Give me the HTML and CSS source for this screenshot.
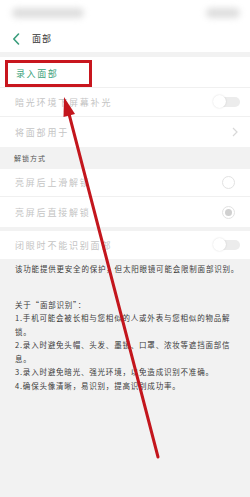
FILE: index.html
```html
<!DOCTYPE html>
<html lang="zh">
<head>
    <meta charset="UTF-8">
    <meta name="viewport" content="width=device-width, initial-scale=1.0">
    <title>面部</title>
    <link rel="stylesheet" href="styles.css">
</head>
<body>
    <div class="page">
        <div class="status">
            <span class="blob blob-left"></span>
            <span class="blob blob-right"></span>
        </div>

        <div class="nav">
            <svg class="back" width="8" height="12" viewBox="0 0 8 12">
                <path d="M6.5 1 L1.8 6 L6.5 11" fill="none" stroke="#3a9d7c" stroke-width="1.6" stroke-linecap="round" stroke-linejoin="round"/>
            </svg>
            <span class="title">面部</span>
        </div>

        <div class="gap"></div>

        <div class="list">
            <div class="row row-enroll">
                <span class="mark">录入面部</span>
            </div>
            <div class="row row-h29">
                <span class="label">暗光环境下屏幕补光</span>
                <span class="toggle"></span>
            </div>
            <div class="row row-h30 last">
                <span class="label">将面部用于</span>
                <svg class="chev" width="6" height="10" viewBox="0 0 6 10">
                    <path d="M1 1 L5 5 L1 9" fill="none" stroke="#d8d8d8" stroke-width="1.2"/>
                </svg>
            </div>
        </div>

        <div class="section">解锁方式</div>

        <div class="list">
            <div class="row row-h28">
                <span class="label">亮屏后上滑解锁</span>
                <span class="radio"></span>
            </div>
            <div class="row row-h30 last">
                <span class="label">亮屏后直接解锁</span>
                <span class="radio checked"></span>
            </div>
        </div>

        <div class="gap small"></div>

        <div class="list">
            <div class="row row-h28 last">
                <span class="label">闭眼时不能识别面部</span>
                <span class="toggle"></span>
            </div>
        </div>

        <div class="notes">
            <p class="desc">该功能提供更安全的保护，但太阳眼镜可能会限制面部识别。</p>
            <p class="about">关于“面部识别”：</p>
            <p>1.手机可能会被长相与您相似的人或外表与您相似的物品解锁。</p>
            <p>2.录入时避免头帽、头发、墨镜、口罩、浓妆等遮挡面部信<br>息。</p>
            <p>3.录入时避免暗光、强光环境，以免造成识别不准确。</p>
            <p>4.确保头像清晰，易识别，提高识别成功率。</p>
        </div>

        <!-- annotation arrow -->
        <svg class="arrow" width="250" height="497" viewBox="0 0 250 497">
            <line x1="158" y1="457" x2="68" y2="110" stroke="#c3161d" stroke-width="3" stroke-linecap="round"/>
            <polygon points="64,97 75,114 63.5,117" fill="#c3161d"/>
        </svg>
    </div>
</body>
</html>
```

FILE: styles.css
```css
* {
    box-sizing: border-box;
}
html, body {
    margin: 0;
    padding: 0;
}
body {
    font-family: "Noto Sans CJK SC", "Noto Sans", sans-serif;
    background: #f2f2f2;
}
.page {
    position: relative;
    width: 250px;
    height: 497px;
    display: flex;
    flex-direction: column;
    background: #f2f2f2;
    overflow: hidden;
}
.status {
    height: 25px;
    background: #fff;
    display: flex;
    justify-content: space-between;
    align-items: center;
    padding: 0 10px 0 12px;
}
.blob {
    height: 10px;
    background: #dedede;
    border-radius: 5px;
    filter: blur(3px);
}
.blob-left {
    width: 72px;
}
.blob-right {
    width: 34px;
}
.nav {
    height: 27px;
    background: #fff;
    display: flex;
    align-items: center;
    padding-left: 12px;
    gap: 12px;
}
.title {
    font-size: 9px;
    letter-spacing: 1px;
    color: #333;
}
.gap {
    height: 5px;
}
.gap.small {
    height: 4px;
}
.list {
    background: #fff;
}
.row {
    display: flex;
    align-items: center;
    justify-content: space-between;
    padding: 0 10px 0 15px;
    border-bottom: 1px solid #f0f0f0;
}
.row.last {
    border-bottom: none;
}
.row-enroll {
    height: 31px;
    padding: 3px 0 0 5px;
    align-items: stretch;
    justify-content: flex-start;
}
.row-h28 {
    height: 28px;
}
.row-h29 {
    height: 29px;
}
.row-h30 {
    height: 30px;
}
.mark {
    width: 87px;
    border: 3px solid #c8161e;
    display: flex;
    align-items: center;
    padding-left: 8px;
    font-size: 9px;
    letter-spacing: 1.6px;
    color: #3aa27a;
}
.label {
    font-size: 9px;
    letter-spacing: 1.8px;
    color: #c4c4c4;
}
.toggle {
    position: relative;
    width: 24px;
    height: 10px;
    border-radius: 5px;
    background: #ececec;
}
.toggle::before {
    content: "";
    position: absolute;
    left: -3px;
    top: -2px;
    width: 13px;
    height: 13px;
    border-radius: 50%;
    background: #fff;
    box-shadow: 0 0 2px rgba(0, 0, 0, 0.15);
}
.chev {
    margin-right: 2px;
}
.radio {
    width: 13px;
    height: 13px;
    border-radius: 50%;
    border: 1px solid #e2e2e2;
    margin-right: 5px;
    display: flex;
    align-items: center;
    justify-content: center;
}
.radio.checked::after {
    content: "";
    width: 7px;
    height: 7px;
    border-radius: 50%;
    background: #d0d0d0;
}
.section {
    height: 22px;
    display: flex;
    align-items: center;
    padding-left: 14px;
    font-size: 7px;
    letter-spacing: 1px;
    color: #555;
}
.notes {
    flex: 1;
    padding: 3px 9px 0 15px;
    font-size: 7.5px;
    letter-spacing: 0.8px;
    line-height: 13.5px;
    color: #3a3a3a;
}
.notes p {
    margin: 0;
}
.notes .about {
    margin-top: 22px;
}
.arrow {
    position: absolute;
    left: 0;
    top: 0;
    pointer-events: none;
}
```
